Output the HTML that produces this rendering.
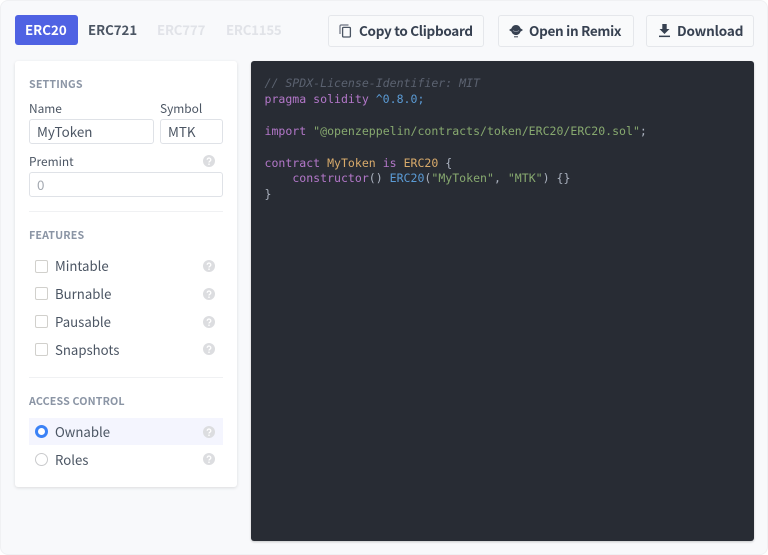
<!DOCTYPE html>
<html><head><meta charset="utf-8"><style>
html,body{margin:0;padding:0;width:768px;height:555px;overflow:hidden;background:#fff}
.t{position:absolute;white-space:pre;line-height:16px;font-family:"Noto Sans CJK JP","Liberation Sans",sans-serif;color:#4b5563}
.b{position:absolute;box-sizing:border-box}
.btn{position:absolute;top:15px;height:32px;box-sizing:border-box;border:1px solid #e5e7eb;border-radius:3px;background:#f9fafb}
.input{position:absolute;box-sizing:border-box;border:1px solid #dfe2e7;border-radius:3px;background:#fff}
.h{font-size:10.7px;font-weight:700;color:#8b95a5;letter-spacing:.15px}
.l{font-size:11.9px;color:#4b5563}
.o{font-size:13.4px;color:#4b5563}
.f{font-size:13.2px}
.tab{font-size:13.2px;font-weight:700}
.bt{font-size:13.5px;font-weight:700;color:#374151;top:22px;letter-spacing:-.3px}
.cb{position:absolute;left:35px;width:13px;height:13px;box-sizing:border-box;border:1px solid #d1d0cc;border-radius:2px;background:#fff}
.q{position:absolute;left:203px}
pre{position:absolute;margin:0;left:264.500px;top:76px;font:11.55px/15.9px "DejaVu Sans Mono",monospace;color:#abb2bf}
.p{color:#b377c9}.g{color:#87a96f}.y{color:#d9ab6b}.c{color:#5b6270;font-style:italic}.n{color:#5b9bd5}
</style></head><body>
<svg width="0" height="0" style="position:absolute"><defs>
<g id="q"><circle cx="6" cy="6" r="6" fill="#dcdde0"/><path d="M4.200 4.700a1.800 1.700 0 1 1 2.700 1.500c-.6.35-.9.6-.9 1.300" fill="none" stroke="#fff" stroke-width="1.300"/><circle cx="6" cy="9.200" r=".8" fill="#fff"/></g>
</defs></svg>
<div class="b" style="left:0;top:0;width:768px;height:555px;background:#f8f9fb;border:1px solid #f0f1f3;border-radius:8px"></div>

<div class="b" style="left:15px;top:15px;width:63px;height:30px;background:#4f62e3;border-radius:3px"></div>
<span class="t tab" style="left:25px;top:22px;color:#fff;font-size:13.3px">ERC20</span>
<span class="t tab" style="left:88px;top:22px;color:#4b5563">ERC721</span>
<span class="t tab" style="left:157px;top:22px;color:#e1e3e8;letter-spacing:-.15px">ERC777</span>
<span class="t tab" style="left:226px;top:22px;color:#e1e3e8;letter-spacing:-.2px">ERC1155</span>

<div class="btn" style="left:328px;width:156px"></div>
<svg class="b" style="left:339px;top:24px" width="14" height="14" viewBox="0 0 14 14"><path d="M9.500 1H2.200C1.500 1 1 1.500 1 2.200V10" fill="none" stroke="#6b7280" stroke-width="1.200"/><rect x="3.600" y="3.400" width="7.800" height="9.600" rx="1" fill="none" stroke="#4b5563" stroke-width="1.300"/></svg>
<span class="t bt" style="left:359px">Copy to Clipboard</span>

<div class="btn" style="left:498px;width:136px"></div>
<svg class="b" style="left:508px;top:24px" width="16" height="14" viewBox="0 0 16 14"><path d="M8 1C5.600 1 4 2.600 3.600 4.300L1 6l2.600 1.700C4 9.300 5.600 11 8 11s4-1.700 4.400-3.300L15 6l-2.600-1.700C12 2.600 10.400 1 8 1z" fill="#374151"/><path d="M6 12.800h4" stroke="#374151" stroke-width="1"/><path d="M5 6.600c1.800 1.200 4.200 1.200 6 0" stroke="#9ca3af" stroke-width=".7" fill="none"/></svg>
<span class="t bt" style="left:529px">Open in Remix</span>

<div class="btn" style="left:646px;width:108px"></div>
<svg class="b" style="left:658px;top:23px" width="13" height="15" viewBox="0 0 13 15"><path d="M4.300 1h4.400v5h2.800L6.500 11 1.500 6h2.800z" fill="#374151"/><rect x="1" y="12.600" width="11" height="1.500" fill="#374151"/></svg>
<span class="t bt" style="left:677px;letter-spacing:-.15px">Download</span>

<div class="b" style="left:15px;top:61px;width:222px;height:426px;background:#fff;border-radius:3px;box-shadow:0 1px 3px rgba(0,0,0,.12)"></div>

<span class="t h" style="left:29px;top:77px">SETTINGS</span>
<span class="t l" style="left:29px;top:101px">Name</span>
<span class="t l" style="left:160px;top:101px">Symbol</span>
<div class="input" style="left:29px;top:119px;width:125px;height:25px"></div>
<div class="input" style="left:160px;top:119px;width:63px;height:25px"></div>
<span class="t o" style="left:37px;top:123px">MyToken</span>
<span class="t o" style="left:168px;top:123px">MTK</span>
<span class="t l" style="left:29px;top:154px">Premint</span>
<svg class="q" style="top:155px" width="12" height="12"><use href="#q"/></svg>
<div class="input" style="left:29px;top:172px;width:194px;height:25px"></div>
<span class="t o" style="left:37px;top:176px;color:#a4a9b1">0</span>
<div class="b" style="left:29px;top:211px;width:194px;height:1px;background:#f0f1f3"></div>

<span class="t h" style="left:29px;top:228px">FEATURES</span>
<div class="cb" style="top:260px"></div><span class="t o f" style="left:55px;top:258px">Mintable</span><svg class="q" style="top:260px" width="12" height="12"><use href="#q"/></svg>
<div class="cb" style="top:287px"></div><span class="t o f" style="left:55px;top:286px">Burnable</span><svg class="q" style="top:288px" width="12" height="12"><use href="#q"/></svg>
<div class="cb" style="top:315px"></div><span class="t o f" style="left:55px;top:314px">Pausable</span><svg class="q" style="top:315.500px" width="12" height="12"><use href="#q"/></svg>
<div class="cb" style="top:343px"></div><span class="t o f" style="left:55px;top:342px">Snapshots</span><svg class="q" style="top:343px" width="12" height="12"><use href="#q"/></svg>
<div class="b" style="left:29px;top:377px;width:194px;height:1px;background:#f0f1f3"></div>

<span class="t h" style="left:29px;top:394px">ACCESS CONTROL</span>
<div class="b" style="left:29px;top:418px;width:194px;height:27px;background:#f4f5fe"></div>
<div class="b" style="left:35px;top:425px;width:13px;height:13px;border-radius:50%;border:3.500px solid #3b82f6;background:#fff"></div>
<span class="t o f" style="left:55px;top:424px">Ownable</span><svg class="q" style="top:426px" width="12" height="12"><use href="#q"/></svg>
<div class="b" style="left:35px;top:453px;width:13px;height:13px;border-radius:50%;border:1px solid #c9cacc;background:#fff"></div>
<span class="t o f" style="left:55px;top:452px">Roles</span><svg class="q" style="top:453px" width="12" height="12"><use href="#q"/></svg>

<div class="b" style="left:251px;top:61px;width:503px;height:480px;background:#282c34;border-radius:3px;box-shadow:0 1px 2px rgba(0,0,0,.2)"></div>
<pre><span class="c">// SPDX-License-Identifier: MIT</span>
<span class="p">pragma solidity</span> <span class="n">^0.8.0;</span>

<span class="p">import</span> <span class="g">"@openzeppelin/contracts/token/ERC20/ERC20.sol"</span>;

<span class="p">contract</span> <span class="y">MyToken</span> <span class="p">is</span> <span class="y">ERC20</span> {
    <span class="p">constructor</span>() <span class="n">ERC20</span>(<span class="g">"MyToken"</span>, <span class="g">"MTK"</span>) {}
}</pre>
</body></html>
